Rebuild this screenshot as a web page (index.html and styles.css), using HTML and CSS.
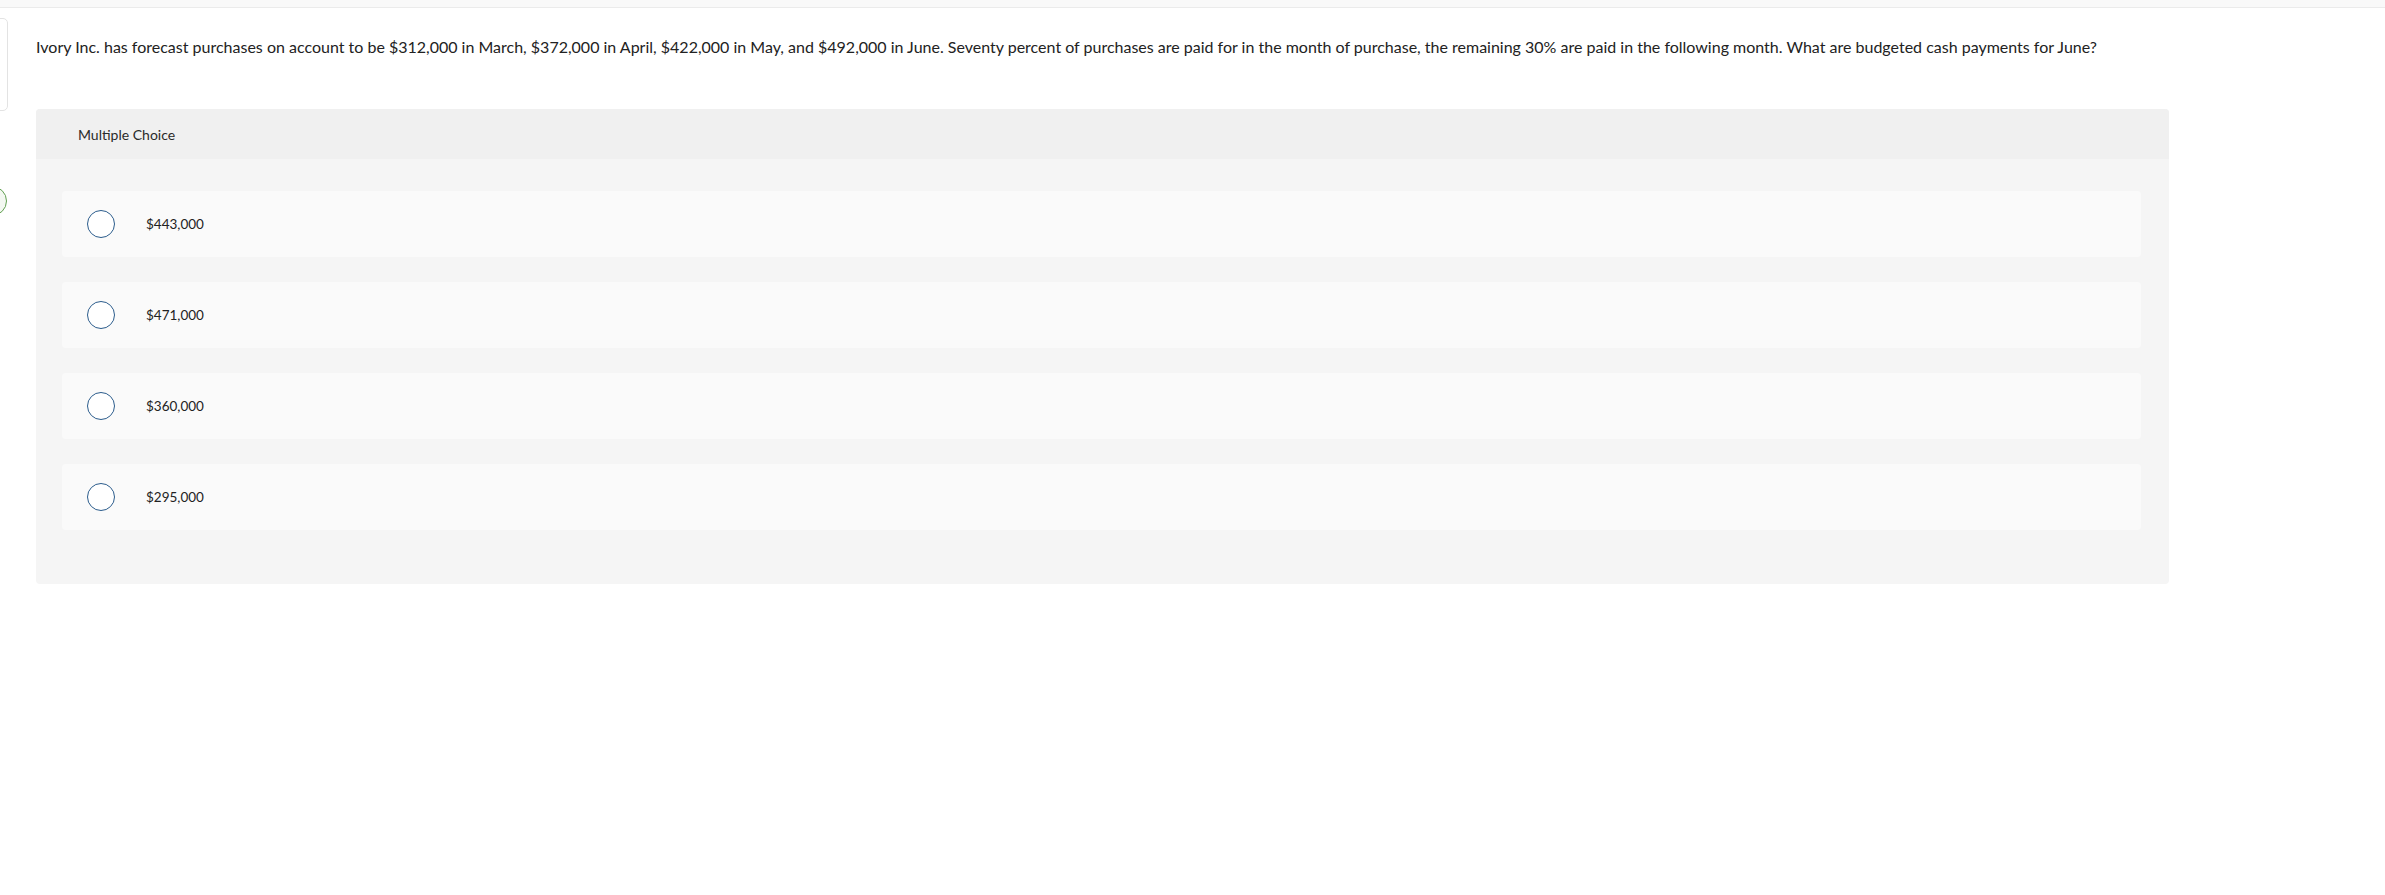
FILE: index.html
```html
<!DOCTYPE html>
<html lang="en">
<head>
<meta charset="utf-8">
<title>Multiple Choice</title>
<link rel="stylesheet" href="styles.css">
</head>
<body>
<div class="topbar"></div>
<div class="page">
  <div class="rail">
    <div class="rail-card"></div>
    <div class="rail-pill"></div>
  </div>
  <main class="main">
    <p class="question">Ivory Inc. has forecast purchases on account to be $312,000 in March, $372,000 in April, $422,000 in May, and $492,000 in June. Seventy percent of purchases are paid for in the month of purchase, the remaining 30% are paid in the following month. What are budgeted cash payments for June?</p>
    <section class="panel">
      <div class="panel-head">Multiple Choice</div>
      <div class="panel-body">
        <label class="option"><span class="radio"></span><span class="opt-text">$443,000</span></label>
        <label class="option"><span class="radio"></span><span class="opt-text">$471,000</span></label>
        <label class="option"><span class="radio"></span><span class="opt-text">$360,000</span></label>
        <label class="option"><span class="radio"></span><span class="opt-text">$295,000</span></label>
      </div>
    </section>
  </main>
</div>
</body>
</html>
```
FILE: styles.css
```css
html, body {
  margin: 0;
  padding: 0;
  background: #ffffff;
  font-family: Lato, "Open Sans", "Liberation Sans", sans-serif;
  color: #1c1c1c;
}

.topbar {
  height: 7px;
  background: #f9f9f9;
  border-bottom: 1px solid #ebebeb;
}

.page {
  display: flex;
  align-items: flex-start;
}

.rail {
  width: 8px;
  flex: none;
  overflow: hidden;
  display: flex;
  flex-direction: column;
}

.rail-card {
  margin-top: 10px;
  margin-left: -52px;
  width: 58px;
  height: 91px;
  border: 1px solid #e3e3e3;
  border-radius: 5px;
  background: #ffffff;
}

.rail-pill {
  margin-top: 75px;
  margin-left: -32px;
  width: 37px;
  height: 28px;
  border: 1.5px solid #62a052;
  border-radius: 15px;
  background: #f3f8f1;
}

.main {
  margin-left: 28px;
  width: 2133px;
  flex: none;
}

.question {
  margin: 28px 0 0;
  font-size: 16px;
  line-height: 22px;
  color: #222222;
}

.panel {
  margin-top: 51px;
  border-radius: 4px;
  background: #f5f5f5;
  overflow: hidden;
}

.panel-head {
  height: 50px;
  display: flex;
  align-items: center;
  padding-left: 42px;
  background: #f0f0f0;
  font-size: 14px;
  color: #2a2a2a;
}

.panel-body {
  display: flex;
  flex-direction: column;
  gap: 25px;
  padding: 32px 28px 54px 26px;
}

.option {
  height: 66px;
  display: flex;
  align-items: center;
  gap: 31px;
  padding-left: 25px;
  background: #fafafa;
  border-radius: 4px;
}

.radio {
  width: 28px;
  height: 28px;
  box-sizing: border-box;
  border: 1.5px solid #2b5c8c;
  border-radius: 50%;
  background: #ffffff;
  flex: none;
}

.opt-text {
  font-size: 13.5px;
  color: #222222;
}
```
